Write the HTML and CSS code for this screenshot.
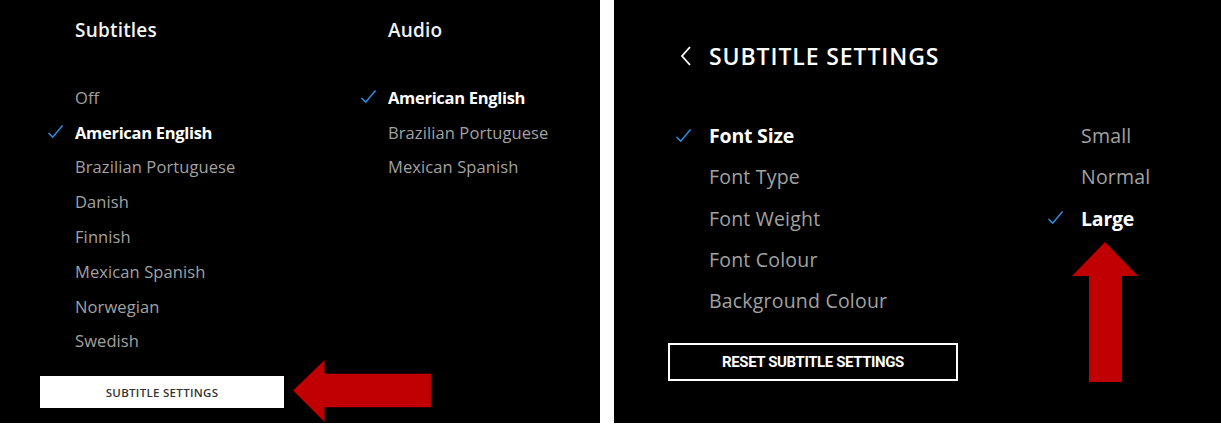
FILE: index.html
```html
<!DOCTYPE html>
<html lang="en">
<head>
<meta charset="utf-8">
<title>Subtitle settings</title>
<link rel="stylesheet" href="styles.css">
</head>
<body>
<div class="shots">
  <section class="panel panel-left">
    <div class="columns">
      <div class="col">
        <h2 class="col-title">Subtitles</h2>
        <ul class="options">
          <li class="opt">Off</li>
          <li class="opt is-on"><svg class="tick" viewBox="0 0 18 16"><path d="M1.5 9.5 L6 14 L16.5 1.5"/></svg>American English</li>
          <li class="opt">Brazilian Portuguese</li>
          <li class="opt">Danish</li>
          <li class="opt">Finnish</li>
          <li class="opt">Mexican Spanish</li>
          <li class="opt">Norwegian</li>
          <li class="opt">Swedish</li>
        </ul>
      </div>
      <div class="col">
        <h2 class="col-title">Audio</h2>
        <ul class="options">
          <li class="opt is-on"><svg class="tick" viewBox="0 0 18 16"><path d="M1.5 9.5 L6 14 L16.5 1.5"/></svg>American English</li>
          <li class="opt">Brazilian Portuguese</li>
          <li class="opt">Mexican Spanish</li>
        </ul>
      </div>
    </div>
    <button class="btn-light">SUBTITLE SETTINGS</button>
    <svg class="arrow arrow-left" viewBox="0 0 140 64"><polygon points="0,31 32,0 32,14 140,14 140,48 32,48 32,63"/></svg>
  </section>

  <section class="panel panel-right">
    <header class="settings-head">
      <svg class="back" viewBox="0 0 14 22"><path d="M11 2 L3 11 L11 20"/></svg>
      <h1 class="settings-title">SUBTITLE SETTINGS</h1>
    </header>
    <div class="settings-grid">
      <ul class="options options-lg">
        <li class="opt is-on"><svg class="tick" viewBox="0 0 18 16"><path d="M1.5 9.5 L6 14 L16.5 1.5"/></svg>Font Size</li>
        <li class="opt">Font Type</li>
        <li class="opt">Font Weight</li>
        <li class="opt">Font Colour</li>
        <li class="opt">Background Colour</li>
      </ul>
      <ul class="options options-lg">
        <li class="opt">Small</li>
        <li class="opt">Normal</li>
        <li class="opt is-on"><svg class="tick" viewBox="0 0 18 16"><path d="M1.5 9.5 L6 14 L16.5 1.5"/></svg>Large</li>
      </ul>
    </div>
    <button class="btn-outline">RESET SUBTITLE SETTINGS</button>
    <svg class="arrow arrow-up" viewBox="0 0 66 140"><polygon points="33,0 66,34 50,34 50,140 17,140 17,34 0,34"/></svg>
  </section>
</div>
</body>
</html>
```

FILE: styles.css
```css
* { box-sizing: border-box; }

html, body {
  margin: 0;
  padding: 0;
  background: #ffffff;
}

body {
  font-family: "Open Sans", "Noto Sans", sans-serif;
  color: #a0a0a0;
}

.shots {
  display: flex;
  gap: 14px;
  width: 1221px;
  height: 426px;
}

.panel {
  position: relative;
  background: #000000;
  height: 423px;
}

.panel-left {
  width: 600px;
  padding: 15px 0 0 47px;
}

.panel-right {
  flex: 1;
  padding: 40px 0 0 61px;
}

/* ---------- left panel ---------- */
.columns {
  display: grid;
  grid-template-columns: 313px 240px;
}

.col-title {
  margin: 0 0 35px 28px;
  font-size: 19px;
  line-height: 30px;
  font-weight: 600;
  color: #f2f2f2;
  letter-spacing: 0.2px;
}

.options {
  list-style: none;
  margin: 0;
  padding: 0;
}

.opt {
  display: flex;
  align-items: center;
  height: 34.8px;
  padding-left: 28px;
  position: relative;
  font-size: 16.5px;
  letter-spacing: 0.1px;
  color: #a2a2a2;
  white-space: nowrap;
}

.opt.is-on {
  color: #ffffff;
  font-weight: 700;
  letter-spacing: -0.3px;
}

.tick {
  position: absolute;
  left: 0;
  top: 50%;
  width: 17px;
  height: 15px;
  margin-top: -8px;
  fill: none;
  stroke: #2b8fe0;
  stroke-width: 1.6;
}

.btn-light {
  display: block;
  margin: 18px 0 0 -7px;
  width: 244px;
  height: 32px;
  border: 0;
  background: #ffffff;
  color: #333333;
  font-family: "Open Sans", sans-serif;
  font-size: 11.5px;
  font-weight: 600;
  letter-spacing: 0.3px;
  padding: 0;
}

.arrow {
  position: absolute;
  fill: #c00000;
}

.arrow-left {
  left: 292px;
  top: 360px;
  width: 140px;
  height: 63px;
}

/* ---------- right panel ---------- */
.settings-head {
  display: flex;
  align-items: center;
  height: 32px;
  gap: 16px;
}

.back {
  width: 14px;
  height: 22px;
  fill: none;
  stroke: #ffffff;
  stroke-width: 1.8;
  margin-left: 4px;
}

.settings-title {
  margin: 0;
  font-size: 23px;
  font-weight: 600;
  color: #ffffff;
  letter-spacing: 0.9px;
}

.settings-grid {
  display: grid;
  grid-template-columns: 372px 140px;
  margin-top: 43px;
}

.options-lg .opt {
  height: 41.25px;
  padding-left: 34px;
  font-size: 19.5px;
  letter-spacing: 0.2px;
}

.options-lg .opt.is-on {
  letter-spacing: -0.2px;
}

.btn-outline {
  display: block;
  margin: 22px 0 0 -7px;
  width: 290px;
  height: 38px;
  border: 2px solid #ffffff;
  background: transparent;
  color: #ffffff;
  font-family: "Roboto", sans-serif;
  font-size: 15px;
  font-weight: 700;
  letter-spacing: -0.4px;
  padding: 0;
}

.arrow-up {
  left: 458px;
  top: 242px;
  width: 66px;
  height: 140px;
}
```
